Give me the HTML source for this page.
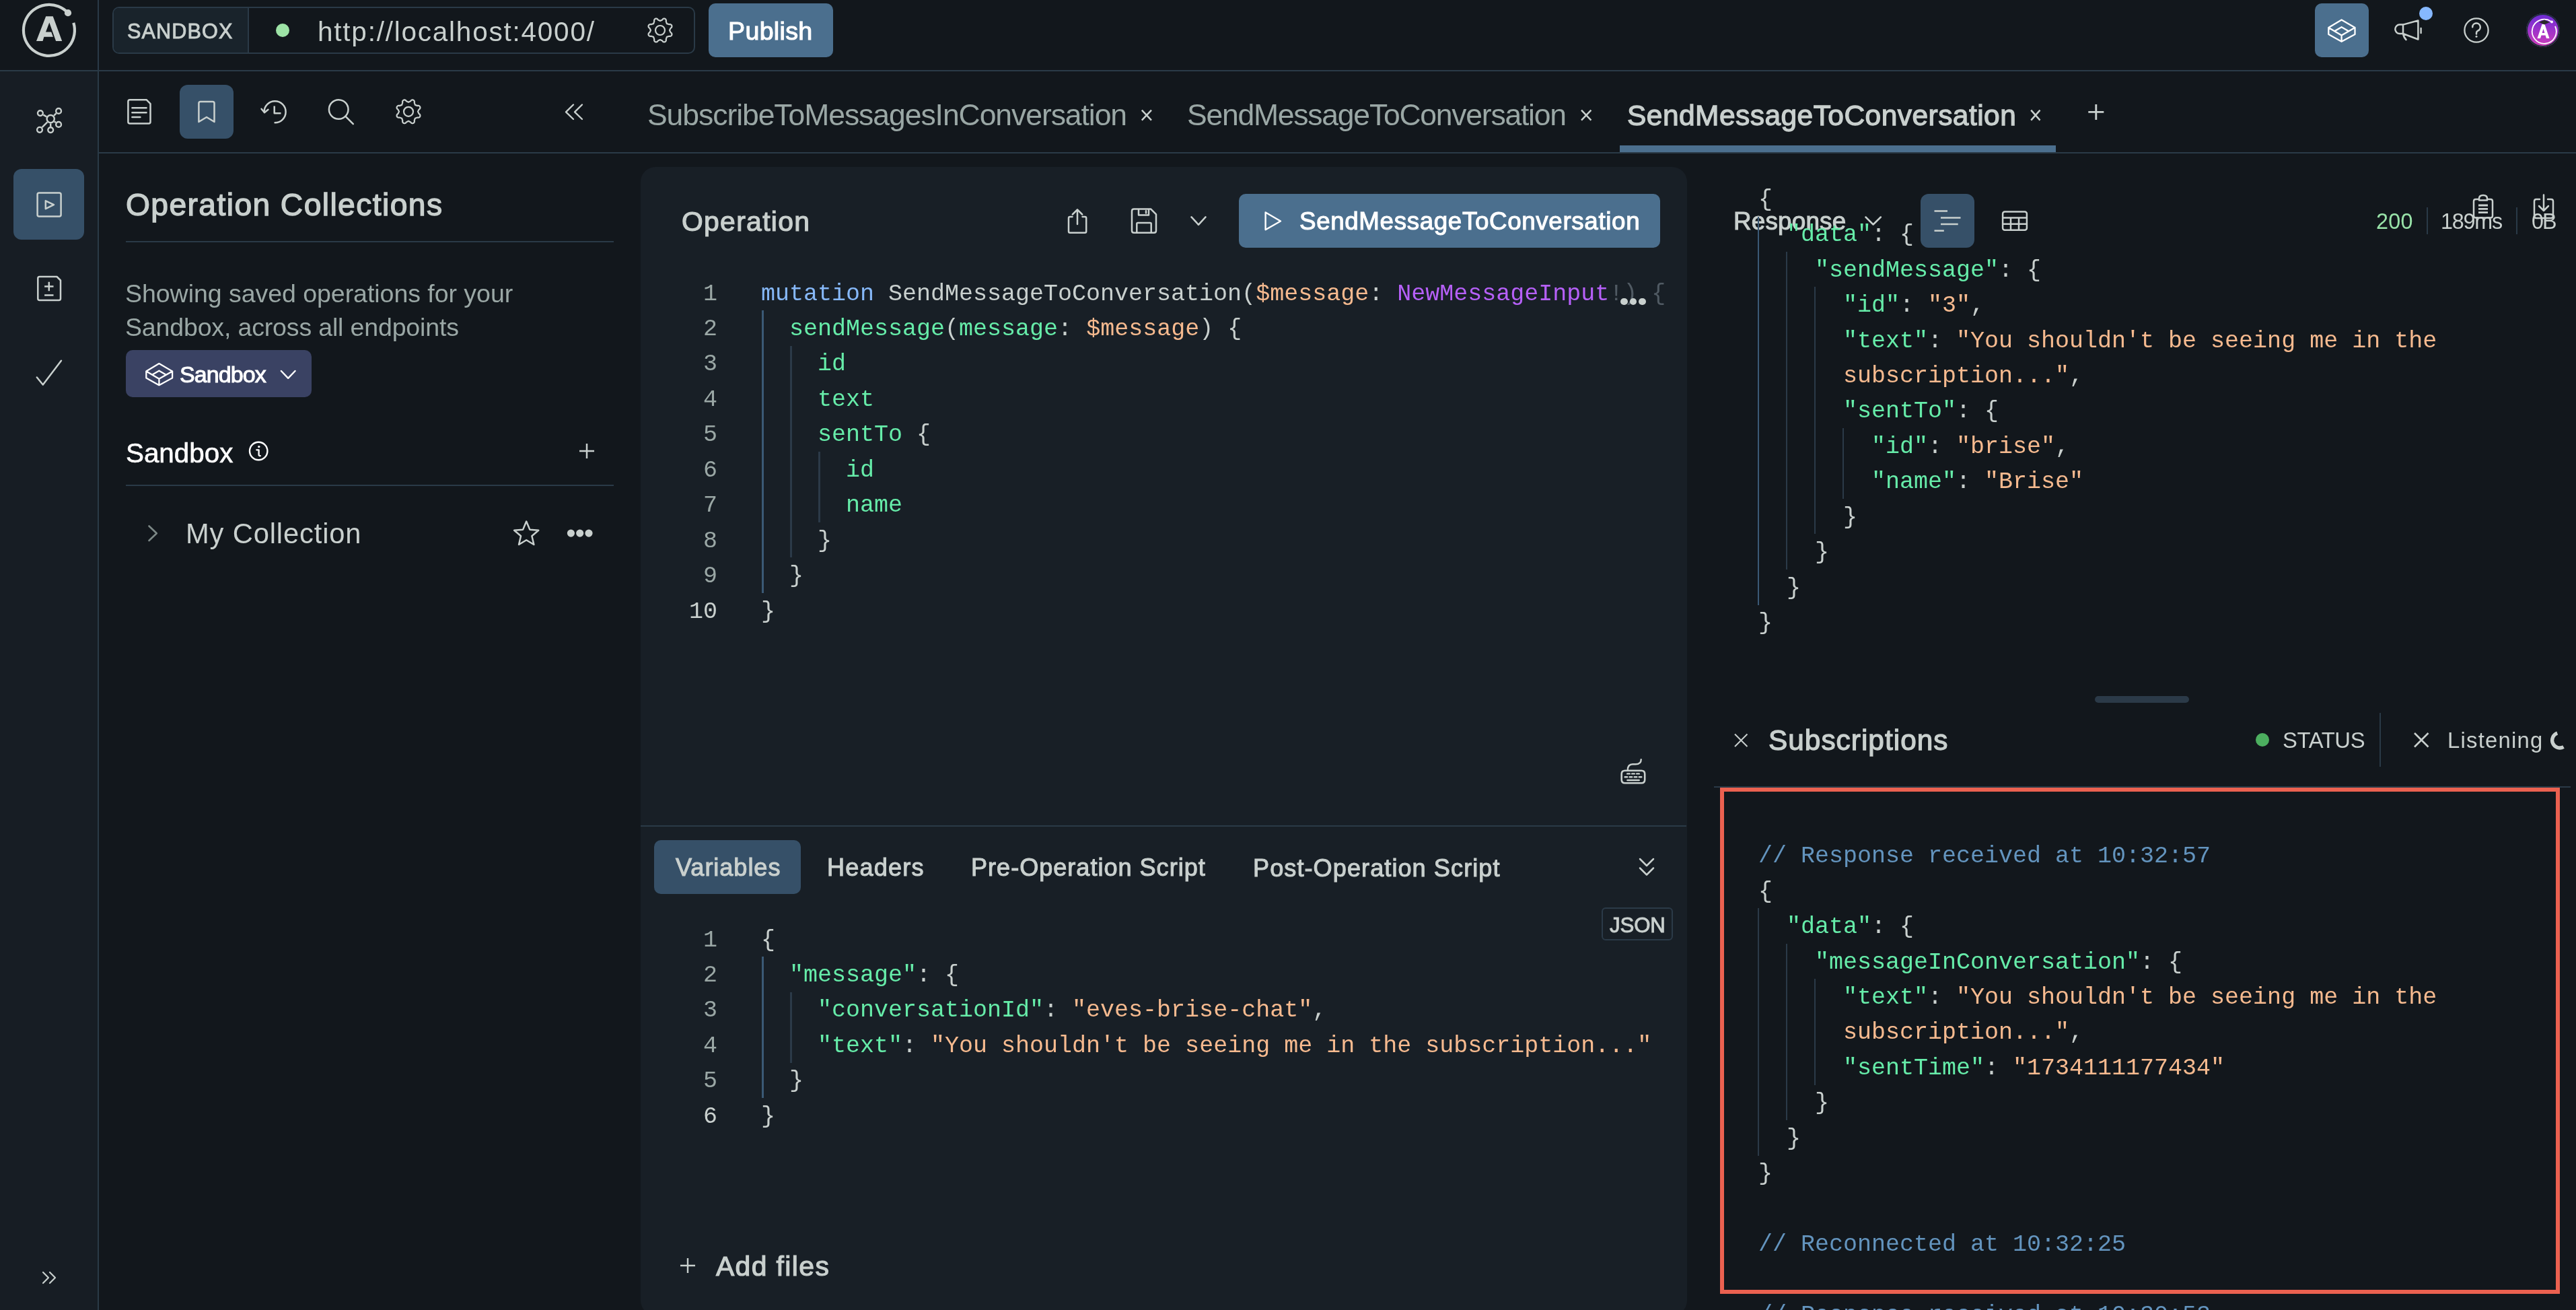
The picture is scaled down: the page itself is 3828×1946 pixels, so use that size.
<!DOCTYPE html>
<html><head><meta charset="utf-8"><title>Apollo Sandbox</title>
<style>
html,body{margin:0;padding:0;}
body{width:3828px;height:1946px;overflow:hidden;background:#12171c;position:relative;font-family:'Liberation Sans', sans-serif;}
.t{position:absolute;white-space:pre;line-height:1;will-change:transform;}
.r{position:absolute;}
</style></head><body>
<div class="r" style="left:0px;top:106px;width:146px;height:1840px;background:#171d24;border-radius:0px;"></div>
<div class="r" style="left:145px;top:0px;width:2px;height:1946px;background:#2a3a47;border-radius:0px;"></div>
<div class="r" style="left:0px;top:104px;width:3828px;height:2px;background:#2a3a47;border-radius:0px;"></div>
<div class="r" style="left:147px;top:226px;width:3681px;height:2px;background:#2a3a47;border-radius:0px;"></div>
<div class="r" style="left:167px;top:10px;width:866px;height:70px;border:2px solid #2a3a47;border-radius:10px;box-sizing:border-box;"></div>
<div class="r" style="left:169px;top:12px;width:200px;height:66px;background:#19232b;border-radius:8px 0 0 8px;"></div>
<div class="r" style="left:368px;top:12px;width:2px;height:66px;background:#2a3a47;border-radius:0px;"></div>
<div class="t" style="left:189px;top:31.2px;font-size:30.6px;color:#c9d0ce;font-weight:400;-webkit-text-stroke:0.92px #c9d0ce;font-family:'Liberation Sans', sans-serif;letter-spacing:1.133px;">SANDBOX</div>
<div class="r" style="left:410.0px;top:35.0px;width:20px;height:20px;border-radius:50%;background:#9de3a6;"></div>
<div class="t" style="left:472.2px;top:27.0px;font-size:40.5px;color:#c9d0ce;font-weight:400;font-family:'Liberation Sans', sans-serif;letter-spacing:1.771px;">http://localhost:4000/</div>
<div class="r" style="left:1053px;top:5px;width:185px;height:80px;background:#4b6f8e;border-radius:10px;"></div>
<div class="t" style="left:1082px;top:27.9px;font-size:37.6px;color:#ffffff;font-weight:400;-webkit-text-stroke:1.13px #ffffff;font-family:'Liberation Sans', sans-serif;letter-spacing:0.333px;">Publish</div>
<div class="r" style="left:3440px;top:5px;width:80px;height:80px;background:#4b6f8e;border-radius:10px;"></div>
<div class="r" style="left:3594.8px;top:9.600000000000001px;width:20.4px;height:20.4px;border-radius:50%;background:#86b8ff;"></div>
<div class="r" style="left:3754px;top:20px;width:50px;height:50px;border-radius:50%;background:linear-gradient(180deg,#6a2bd6 0%,#a233c8 55%,#d23fb8 100%);box-shadow:0 0 0 2px #1f2e38 inset;"></div>
<div class="r" style="left:267px;top:126px;width:80px;height:80px;background:#365068;border-radius:12px;"></div>
<div class="t" style="left:961.5px;top:149.3px;font-size:44.5px;color:#9aa7a5;font-weight:400;font-family:'Liberation Sans', sans-serif;letter-spacing:-1.059px;">SubscribeToMessagesInConversation</div>
<div class="t" style="left:1764px;top:149.3px;font-size:44.5px;color:#9aa7a5;font-weight:400;font-family:'Liberation Sans', sans-serif;letter-spacing:-1.237px;">SendMessageToConversation</div>
<div class="t" style="left:2417.6px;top:151.0px;font-size:42.5px;color:#c9d0ce;font-weight:400;-webkit-text-stroke:1.27px #c9d0ce;font-family:'Liberation Sans', sans-serif;letter-spacing:0.45px;">SendMessageToConversation</div>
<div class="r" style="left:2407px;top:216px;width:648px;height:10px;background:#4b6f8e;border-radius:0px;"></div>
<div class="r" style="left:20px;top:251px;width:105px;height:105px;background:#365068;border-radius:12px;"></div>
<div class="t" style="left:187.2px;top:280.9px;font-size:46.2px;color:#c9d0ce;font-weight:400;-webkit-text-stroke:1.39px #c9d0ce;font-family:'Liberation Sans', sans-serif;letter-spacing:1.42px;">Operation Collections</div>
<div class="r" style="left:187px;top:358px;width:725px;height:2px;background:#2a3a47;border-radius:0px;"></div>
<div class="t" style="left:186.2px;top:417.7px;font-size:37.5px;color:#9aa7a5;font-weight:400;font-family:'Liberation Sans', sans-serif;letter-spacing:-0.038px;">Showing saved operations for your</div>
<div class="t" style="left:186.2px;top:467.6px;font-size:37.5px;color:#9aa7a5;font-weight:400;font-family:'Liberation Sans', sans-serif;letter-spacing:-0.157px;">Sandbox, across all endpoints</div>
<div class="r" style="left:187px;top:520px;width:276px;height:70px;background:#3a4263;border-radius:10px;"></div>
<div class="t" style="left:267.4px;top:539.3px;font-size:34px;color:#ffffff;font-weight:400;-webkit-text-stroke:1.02px #ffffff;font-family:'Liberation Sans', sans-serif;letter-spacing:-0.9px;">Sandbox</div>
<div class="t" style="left:187.2px;top:652.5px;font-size:40.4px;color:#ffffff;font-weight:400;-webkit-text-stroke:0.61px #ffffff;font-family:'Liberation Sans', sans-serif;letter-spacing:-0.017px;">Sandbox</div>
<div class="r" style="left:187px;top:720px;width:725px;height:2px;background:#2a3a47;border-radius:0px;"></div>
<div class="t" style="left:276px;top:771.9px;font-size:41.7px;color:#c9d0ce;font-weight:400;font-family:'Liberation Sans', sans-serif;letter-spacing:0.858px;">My Collection</div>
<div class="r" style="left:952px;top:248px;width:1555px;height:1706px;background:#181f26;border-radius:22px;"></div>
<div class="t" style="left:1012.7px;top:308.5px;font-size:40.8px;color:#c9d0ce;font-weight:400;-webkit-text-stroke:1.22px #c9d0ce;font-family:'Liberation Sans', sans-serif;letter-spacing:1.35px;">Operation</div>
<div class="r" style="left:1841px;top:288px;width:626px;height:80px;background:#4b6f8e;border-radius:10px;"></div>
<div class="t" style="left:1931.2px;top:311.4px;font-size:36.7px;color:#ffffff;font-weight:400;-webkit-text-stroke:1.10px #ffffff;font-family:'Liberation Sans', sans-serif;letter-spacing:0.671px;">SendMessageToConversation</div>
<div class="t" style="left:1045.0px;top:419.5px;font-size:35px;color:#9aa7a5;font-weight:400;font-family:'Liberation Mono', monospace;">1</div>
<div class="t" style="left:1045.0px;top:471.9px;font-size:35px;color:#9aa7a5;font-weight:400;font-family:'Liberation Mono', monospace;">2</div>
<div class="t" style="left:1045.0px;top:524.4px;font-size:35px;color:#9aa7a5;font-weight:400;font-family:'Liberation Mono', monospace;">3</div>
<div class="t" style="left:1045.0px;top:576.8px;font-size:35px;color:#9aa7a5;font-weight:400;font-family:'Liberation Mono', monospace;">4</div>
<div class="t" style="left:1045.0px;top:629.3px;font-size:35px;color:#9aa7a5;font-weight:400;font-family:'Liberation Mono', monospace;">5</div>
<div class="t" style="left:1045.0px;top:681.7px;font-size:35px;color:#9aa7a5;font-weight:400;font-family:'Liberation Mono', monospace;">6</div>
<div class="t" style="left:1045.0px;top:734.2px;font-size:35px;color:#9aa7a5;font-weight:400;font-family:'Liberation Mono', monospace;">7</div>
<div class="t" style="left:1045.0px;top:786.6px;font-size:35px;color:#9aa7a5;font-weight:400;font-family:'Liberation Mono', monospace;">8</div>
<div class="t" style="left:1045.0px;top:839.1px;font-size:35px;color:#9aa7a5;font-weight:400;font-family:'Liberation Mono', monospace;">9</div>
<div class="t" style="left:1024.0px;top:891.5px;font-size:35px;color:#c9d0ce;font-weight:400;font-family:'Liberation Mono', monospace;">10</div>
<div class="t" style="left:1131px;top:419.5px;font-size:35px;color:#c9d0ce;font-weight:400;font-family:'Liberation Mono', monospace;"><span style="color:#86b8f8">mutation</span><span style="color:#c9d0ce"> SendMessageToConversation(</span><span style="color:#f6ba8f">$message</span><span style="color:#c9d0ce">: </span><span style="color:#b660f8">NewMessageInput</span><span style="color:#505a63">!) {</span></div>
<div class="t" style="left:1131px;top:471.9px;font-size:35px;color:#c9d0ce;font-weight:400;font-family:'Liberation Mono', monospace;"><span style="color:#c9d0ce">  </span><span style="color:#66eca9">sendMessage</span><span style="color:#c9d0ce">(</span><span style="color:#66eca9">message</span><span style="color:#c9d0ce">: </span><span style="color:#f6ba8f">$message</span><span style="color:#c9d0ce">) {</span></div>
<div class="t" style="left:1131px;top:524.4px;font-size:35px;color:#c9d0ce;font-weight:400;font-family:'Liberation Mono', monospace;"><span style="color:#66eca9">    id</span></div>
<div class="t" style="left:1131px;top:576.8px;font-size:35px;color:#c9d0ce;font-weight:400;font-family:'Liberation Mono', monospace;"><span style="color:#66eca9">    text</span></div>
<div class="t" style="left:1131px;top:629.3px;font-size:35px;color:#c9d0ce;font-weight:400;font-family:'Liberation Mono', monospace;"><span style="color:#66eca9">    sentTo</span><span style="color:#c9d0ce"> {</span></div>
<div class="t" style="left:1131px;top:681.7px;font-size:35px;color:#c9d0ce;font-weight:400;font-family:'Liberation Mono', monospace;"><span style="color:#66eca9">      id</span></div>
<div class="t" style="left:1131px;top:734.2px;font-size:35px;color:#c9d0ce;font-weight:400;font-family:'Liberation Mono', monospace;"><span style="color:#66eca9">      name</span></div>
<div class="t" style="left:1131px;top:786.6px;font-size:35px;color:#c9d0ce;font-weight:400;font-family:'Liberation Mono', monospace;"><span style="color:#c9d0ce">    }</span></div>
<div class="t" style="left:1131px;top:839.1px;font-size:35px;color:#c9d0ce;font-weight:400;font-family:'Liberation Mono', monospace;"><span style="color:#c9d0ce">  }</span></div>
<div class="t" style="left:1131px;top:891.5px;font-size:35px;color:#c9d0ce;font-weight:400;font-family:'Liberation Mono', monospace;"><span style="color:#c9d0ce">}</span></div>
<div class="r" style="left:2408.15px;top:442.55px;width:10.5px;height:10.5px;border-radius:50%;background:#c9d0ce;"></div>
<div class="r" style="left:2421.75px;top:442.55px;width:10.5px;height:10.5px;border-radius:50%;background:#c9d0ce;"></div>
<div class="r" style="left:2435.25px;top:442.55px;width:10.5px;height:10.5px;border-radius:50%;background:#c9d0ce;"></div>
<div class="r" style="left:1132.3px;top:461.3px;width:2.5px;height:419.6px;background:#3b5975;border-radius:0px;"></div>
<div class="r" style="left:1174.3px;top:513.75px;width:2.5px;height:314.7px;background:#2b3a48;border-radius:0px;"></div>
<div class="r" style="left:1216.3px;top:671.1px;width:2.5px;height:104.9px;background:#2b3a48;border-radius:0px;"></div>
<div class="r" style="left:952px;top:1226px;width:1554px;height:2px;background:#2a3a47;border-radius:0px;"></div>
<div class="r" style="left:972px;top:1248px;width:218px;height:80px;background:#365068;border-radius:10px;"></div>
<div class="t" style="left:1004.3px;top:1271.4px;font-size:36.1px;color:#c9d0ce;font-weight:400;-webkit-text-stroke:1.08px #c9d0ce;font-family:'Liberation Sans', sans-serif;letter-spacing:0.963px;">Variables</div>
<div class="t" style="left:1229.1px;top:1271.4px;font-size:36.1px;color:#c9d0ce;font-weight:400;-webkit-text-stroke:1.08px #c9d0ce;font-family:'Liberation Sans', sans-serif;letter-spacing:1.183px;">Headers</div>
<div class="t" style="left:1442.8px;top:1271.4px;font-size:36.1px;color:#c9d0ce;font-weight:400;-webkit-text-stroke:1.08px #c9d0ce;font-family:'Liberation Sans', sans-serif;letter-spacing:0.995px;">Pre-Operation Script</div>
<div class="t" style="left:1861.8px;top:1271.9px;font-size:36.1px;color:#c9d0ce;font-weight:400;-webkit-text-stroke:1.08px #c9d0ce;font-family:'Liberation Sans', sans-serif;letter-spacing:1.08px;">Post-Operation Script</div>
<div class="r" style="left:2380px;top:1348px;width:106px;height:49px;border:2px solid #2b3a48;border-radius:6px;box-sizing:border-box;"></div>
<div class="t" style="left:2392px;top:1358.8px;font-size:31.2px;color:#c9d0ce;font-weight:400;-webkit-text-stroke:0.94px #c9d0ce;font-family:'Liberation Sans', sans-serif;letter-spacing:-0.133px;">JSON</div>
<div class="t" style="left:1045.0px;top:1379.5px;font-size:35px;color:#9aa7a5;font-weight:400;font-family:'Liberation Mono', monospace;">1</div>
<div class="t" style="left:1045.0px;top:1431.9px;font-size:35px;color:#9aa7a5;font-weight:400;font-family:'Liberation Mono', monospace;">2</div>
<div class="t" style="left:1045.0px;top:1484.4px;font-size:35px;color:#9aa7a5;font-weight:400;font-family:'Liberation Mono', monospace;">3</div>
<div class="t" style="left:1045.0px;top:1536.8px;font-size:35px;color:#9aa7a5;font-weight:400;font-family:'Liberation Mono', monospace;">4</div>
<div class="t" style="left:1045.0px;top:1589.3px;font-size:35px;color:#9aa7a5;font-weight:400;font-family:'Liberation Mono', monospace;">5</div>
<div class="t" style="left:1045.0px;top:1641.7px;font-size:35px;color:#c9d0ce;font-weight:400;font-family:'Liberation Mono', monospace;">6</div>
<div class="t" style="left:1131px;top:1379.5px;font-size:35px;color:#c9d0ce;font-weight:400;font-family:'Liberation Mono', monospace;"><span style="color:#c9d0ce">{</span></div>
<div class="t" style="left:1131px;top:1431.9px;font-size:35px;color:#c9d0ce;font-weight:400;font-family:'Liberation Mono', monospace;"><span style="color:#c9d0ce">  </span><span style="color:#66eca9">"message"</span><span style="color:#c9d0ce">: {</span></div>
<div class="t" style="left:1131px;top:1484.4px;font-size:35px;color:#c9d0ce;font-weight:400;font-family:'Liberation Mono', monospace;"><span style="color:#c9d0ce">    </span><span style="color:#66eca9">"conversationId"</span><span style="color:#c9d0ce">: </span><span style="color:#f6ba8f">"eves-brise-chat"</span><span style="color:#c9d0ce">,</span></div>
<div class="t" style="left:1131px;top:1536.8px;font-size:35px;color:#c9d0ce;font-weight:400;font-family:'Liberation Mono', monospace;"><span style="color:#c9d0ce">    </span><span style="color:#66eca9">"text"</span><span style="color:#c9d0ce">: </span><span style="color:#f6ba8f">"You shouldn't be seeing me in the subscription..."</span></div>
<div class="t" style="left:1131px;top:1589.3px;font-size:35px;color:#c9d0ce;font-weight:400;font-family:'Liberation Mono', monospace;"><span style="color:#c9d0ce">  }</span></div>
<div class="t" style="left:1131px;top:1641.7px;font-size:35px;color:#c9d0ce;font-weight:400;font-family:'Liberation Mono', monospace;"><span style="color:#c9d0ce">}</span></div>
<div class="r" style="left:1132.3px;top:1421.3px;width:2.5px;height:209.8px;background:#3b5975;border-radius:0px;"></div>
<div class="r" style="left:1174.3px;top:1473.75px;width:2.5px;height:104.9px;background:#2b3a48;border-radius:0px;"></div>
<div class="t" style="left:1064.1px;top:1860.7px;font-size:40.8px;color:#c9d0ce;font-weight:400;-webkit-text-stroke:1.22px #c9d0ce;font-family:'Liberation Sans', sans-serif;letter-spacing:1.413px;">Add files</div>
<div class="t" style="left:2575.7px;top:311.3px;font-size:36.8px;color:#c9d0ce;font-weight:400;-webkit-text-stroke:1.10px #c9d0ce;font-family:'Liberation Sans', sans-serif;letter-spacing:0.214px;">Response</div>
<div class="r" style="left:2854px;top:288px;width:80px;height:80px;background:#365068;border-radius:12px;"></div>
<div class="t" style="left:2613px;top:279.7px;font-size:35px;color:#c9d0ce;font-weight:400;font-family:'Liberation Mono', monospace;"><span style="color:#c9d0ce">{</span></div>
<div class="t" style="left:2655px;top:332.1px;font-size:35px;color:#c9d0ce;font-weight:400;font-family:'Liberation Mono', monospace;"><span style="color:#66eca9">"data"</span><span style="color:#c9d0ce">: {</span></div>
<div class="t" style="left:2697px;top:384.6px;font-size:35px;color:#c9d0ce;font-weight:400;font-family:'Liberation Mono', monospace;"><span style="color:#66eca9">"sendMessage"</span><span style="color:#c9d0ce">: {</span></div>
<div class="t" style="left:2739px;top:437.0px;font-size:35px;color:#c9d0ce;font-weight:400;font-family:'Liberation Mono', monospace;"><span style="color:#66eca9">"id"</span><span style="color:#c9d0ce">: </span><span style="color:#f6ba8f">"3"</span><span style="color:#c9d0ce">,</span></div>
<div class="t" style="left:2739px;top:489.5px;font-size:35px;color:#c9d0ce;font-weight:400;font-family:'Liberation Mono', monospace;"><span style="color:#66eca9">"text"</span><span style="color:#c9d0ce">: </span><span style="color:#f6ba8f">"You shouldn't be seeing me in the</span></div>
<div class="t" style="left:2739px;top:541.9px;font-size:35px;color:#c9d0ce;font-weight:400;font-family:'Liberation Mono', monospace;"><span style="color:#f6ba8f">subscription..."</span><span style="color:#c9d0ce">,</span></div>
<div class="t" style="left:2739px;top:594.4px;font-size:35px;color:#c9d0ce;font-weight:400;font-family:'Liberation Mono', monospace;"><span style="color:#66eca9">"sentTo"</span><span style="color:#c9d0ce">: {</span></div>
<div class="t" style="left:2781px;top:646.8px;font-size:35px;color:#c9d0ce;font-weight:400;font-family:'Liberation Mono', monospace;"><span style="color:#66eca9">"id"</span><span style="color:#c9d0ce">: </span><span style="color:#f6ba8f">"brise"</span><span style="color:#c9d0ce">,</span></div>
<div class="t" style="left:2781px;top:699.3px;font-size:35px;color:#c9d0ce;font-weight:400;font-family:'Liberation Mono', monospace;"><span style="color:#66eca9">"name"</span><span style="color:#c9d0ce">: </span><span style="color:#f6ba8f">"Brise"</span></div>
<div class="t" style="left:2739px;top:751.7px;font-size:35px;color:#c9d0ce;font-weight:400;font-family:'Liberation Mono', monospace;"><span style="color:#c9d0ce">}</span></div>
<div class="t" style="left:2697px;top:804.2px;font-size:35px;color:#c9d0ce;font-weight:400;font-family:'Liberation Mono', monospace;"><span style="color:#c9d0ce">}</span></div>
<div class="t" style="left:2655px;top:856.6px;font-size:35px;color:#c9d0ce;font-weight:400;font-family:'Liberation Mono', monospace;"><span style="color:#c9d0ce">}</span></div>
<div class="t" style="left:2613px;top:909.1px;font-size:35px;color:#c9d0ce;font-weight:400;font-family:'Liberation Mono', monospace;"><span style="color:#c9d0ce">}</span></div>
<div class="r" style="left:2611.5px;top:321.5px;width:2.5px;height:577.0px;background:#3b5975;border-radius:0px;"></div>
<div class="r" style="left:2653.5px;top:373.95px;width:2.5px;height:472.1px;background:#2b3a48;border-radius:0px;"></div>
<div class="r" style="left:2695.5px;top:426.4px;width:2.5px;height:367.1px;background:#2b3a48;border-radius:0px;"></div>
<div class="r" style="left:2737.5px;top:636.2px;width:2.5px;height:104.9px;background:#2b3a48;border-radius:0px;"></div>
<div class="t" style="left:3530.6px;top:312.8px;font-size:32.3px;color:#98e2a8;font-weight:400;font-family:'Liberation Sans', sans-serif;letter-spacing:0.35px;">200</div>
<div class="r" style="left:3606px;top:308px;width:2px;height:40px;background:#2a3a47;border-radius:0px;"></div>
<div class="t" style="left:3626.9px;top:312.8px;font-size:32.3px;color:#c9d0ce;font-weight:400;font-family:'Liberation Sans', sans-serif;letter-spacing:-1.225px;">189ms</div>
<div class="r" style="left:3739px;top:308px;width:2px;height:40px;background:#2a3a47;border-radius:0px;"></div>
<div class="t" style="left:3762px;top:312.8px;font-size:32.3px;color:#c9d0ce;font-weight:400;font-family:'Liberation Sans', sans-serif;letter-spacing:-2.0px;">0B</div>
<div class="r" style="left:3113px;top:1034px;width:140px;height:10px;background:#2b3a48;border-radius:5px;"></div>
<div class="t" style="left:2627.5px;top:1078.7px;font-size:42.3px;color:#c9d0ce;font-weight:400;-webkit-text-stroke:1.27px #c9d0ce;font-family:'Liberation Sans', sans-serif;letter-spacing:1.042px;">Subscriptions</div>
<div class="r" style="left:3352.0px;top:1089.0px;width:20px;height:20px;border-radius:50%;background:#4caf5f;"></div>
<div class="t" style="left:3392px;top:1083.8px;font-size:32.8px;color:#c9d0ce;font-weight:400;font-family:'Liberation Sans', sans-serif;letter-spacing:-0.4px;">STATUS</div>
<div class="r" style="left:3536px;top:1059px;width:2px;height:80px;background:#2a3a47;border-radius:0px;"></div>
<div class="t" style="left:3637px;top:1083.8px;font-size:32.8px;color:#c9d0ce;font-weight:400;font-family:'Liberation Sans', sans-serif;letter-spacing:1.25px;">Listening</div>
<div class="r" style="left:2547px;top:1168px;width:1273px;height:2px;background:#2a3a47;border-radius:0px;"></div>
<div class="r" style="left:2556px;top:1170px;width:1248px;height:752px;border:6px solid #eb6150;box-sizing:border-box;"></div>
<div class="t" style="left:2613px;top:1255.2px;font-size:35px;color:#c9d0ce;font-weight:400;font-family:'Liberation Mono', monospace;"><span style="color:#6394be">// Response received at 10:32:57</span></div>
<div class="t" style="left:2613px;top:1307.6px;font-size:35px;color:#c9d0ce;font-weight:400;font-family:'Liberation Mono', monospace;"><span style="color:#c9d0ce">{</span></div>
<div class="t" style="left:2655px;top:1360.1px;font-size:35px;color:#c9d0ce;font-weight:400;font-family:'Liberation Mono', monospace;"><span style="color:#66eca9">"data"</span><span style="color:#c9d0ce">: {</span></div>
<div class="t" style="left:2697px;top:1412.5px;font-size:35px;color:#c9d0ce;font-weight:400;font-family:'Liberation Mono', monospace;"><span style="color:#66eca9">"messageInConversation"</span><span style="color:#c9d0ce">: {</span></div>
<div class="t" style="left:2739px;top:1465.0px;font-size:35px;color:#c9d0ce;font-weight:400;font-family:'Liberation Mono', monospace;"><span style="color:#66eca9">"text"</span><span style="color:#c9d0ce">: </span><span style="color:#f6ba8f">"You shouldn't be seeing me in the</span></div>
<div class="t" style="left:2739px;top:1517.4px;font-size:35px;color:#c9d0ce;font-weight:400;font-family:'Liberation Mono', monospace;"><span style="color:#f6ba8f">subscription..."</span><span style="color:#c9d0ce">,</span></div>
<div class="t" style="left:2739px;top:1569.9px;font-size:35px;color:#c9d0ce;font-weight:400;font-family:'Liberation Mono', monospace;"><span style="color:#66eca9">"sentTime"</span><span style="color:#c9d0ce">: </span><span style="color:#f6ba8f">"1734111177434"</span></div>
<div class="t" style="left:2697px;top:1622.3px;font-size:35px;color:#c9d0ce;font-weight:400;font-family:'Liberation Mono', monospace;"><span style="color:#c9d0ce">}</span></div>
<div class="t" style="left:2655px;top:1674.8px;font-size:35px;color:#c9d0ce;font-weight:400;font-family:'Liberation Mono', monospace;"><span style="color:#c9d0ce">}</span></div>
<div class="t" style="left:2613px;top:1727.2px;font-size:35px;color:#c9d0ce;font-weight:400;font-family:'Liberation Mono', monospace;"><span style="color:#c9d0ce">}</span></div>
<div class="t" style="left:2613px;top:1832.1px;font-size:35px;color:#c9d0ce;font-weight:400;font-family:'Liberation Mono', monospace;"><span style="color:#6394be">// Reconnected at 10:32:25</span></div>
<div class="t" style="left:2613px;top:1937.0px;font-size:35px;color:#c9d0ce;font-weight:400;font-family:'Liberation Mono', monospace;"><span style="color:#6394be">// Response received at 10:30:53</span></div>
<div class="r" style="left:2611.5px;top:1349.45px;width:2.5px;height:367.1px;background:#2b3a48;border-radius:0px;"></div>
<div class="r" style="left:2653.5px;top:1401.9px;width:2.5px;height:262.2px;background:#2b3a48;border-radius:0px;"></div>
<div class="r" style="left:2695.5px;top:1454.35px;width:2.5px;height:157.4px;background:#2b3a48;border-radius:0px;"></div>
<svg class="r" style="left:0;top:0;" width="3828" height="1946" viewBox="0 0 3828 1946"><path d="M109.3,33.9 A38,38 0 1 1 101,19.3" stroke="#c9d0ce" stroke-width="4.2" stroke-linecap="butt" stroke-linejoin="round" fill="none"/><circle cx="101" cy="19.2" r="5.1" fill="#c9d0ce"/><path d="M54,60.9 L68.2,24.3 L78.7,24.3 L92.2,60.9 L83.1,60.9 L73.3,33.4 L68,47.5 L76.2,47.5 L78.9,54.7 L65.4,54.7 L63.5,60.9 Z" fill="#c9d0ce"/><path d="M971.1,35.1 L972.3,31.7 L972.1,31.0 L972.1,30.2 L972.3,29.4 L972.7,28.8 L973.2,28.2 L973.9,27.8 L974.6,27.6 L975.4,27.6 L976.2,27.8 L976.9,28.2 L977.4,28.8 L977.8,29.4 L981.0,31.0 L984.2,29.4 L984.6,28.8 L985.1,28.2 L985.8,27.8 L986.6,27.6 L987.4,27.6 L988.1,27.8 L988.8,28.2 L989.3,28.8 L989.7,29.4 L989.9,30.2 L989.9,31.0 L989.7,31.7 L990.9,35.1 L994.3,36.3 L995.0,36.1 L995.8,36.1 L996.6,36.3 L997.2,36.7 L997.8,37.2 L998.2,37.9 L998.4,38.6 L998.4,39.4 L998.2,40.2 L997.8,40.9 L997.2,41.4 L996.6,41.8 L995.0,45.0 L996.6,48.2 L997.2,48.6 L997.8,49.1 L998.2,49.8 L998.4,50.6 L998.4,51.4 L998.2,52.1 L997.8,52.8 L997.2,53.3 L996.6,53.7 L995.8,53.9 L995.0,53.9 L994.3,53.7 L990.9,54.9 L989.7,58.3 L989.9,59.0 L989.9,59.8 L989.7,60.6 L989.3,61.2 L988.8,61.8 L988.1,62.2 L987.4,62.4 L986.6,62.4 L985.8,62.2 L985.1,61.8 L984.6,61.2 L984.2,60.6 L981.0,59.0 L977.8,60.6 L977.4,61.2 L976.9,61.8 L976.2,62.2 L975.4,62.4 L974.6,62.4 L973.9,62.2 L973.2,61.8 L972.7,61.2 L972.3,60.6 L972.1,59.8 L972.1,59.0 L972.3,58.3 L971.1,54.9 L967.7,53.7 L967.0,53.9 L966.2,53.9 L965.4,53.7 L964.8,53.3 L964.2,52.8 L963.8,52.1 L963.6,51.4 L963.6,50.6 L963.8,49.8 L964.2,49.1 L964.8,48.6 L965.4,48.2 L967.0,45.0 L965.4,41.8 L964.8,41.4 L964.2,40.9 L963.8,40.2 L963.6,39.4 L963.6,38.6 L963.8,37.9 L964.2,37.2 L964.8,36.7 L965.4,36.3 L966.2,36.1 L967.0,36.1 L967.7,36.3 Z" stroke="#c9d0ce" stroke-width="2.2" stroke-linecap="round" stroke-linejoin="round" fill="none"/><circle cx="981" cy="45" r="7.0" stroke="#c9d0ce" stroke-width="2.2" fill="none"/><g transform="translate(3460,28.6) scale(1.0)"><path d="M19.6,0.8 L39.5,12.4 L19.6,23.8 L0.3,12.4 Z M19.6,11.6 L29.6,17.4 M19.6,11.6 L9.6,17.4 M0.3,12.4 V22.4 L19.6,33.2 L39.5,22.4 V12.4 M19.6,23.8 V33.2" stroke="#ffffff" stroke-width="2.3" fill="none" stroke-linejoin="round" stroke-linecap="round"/></g><path d="M3571,36.6 H3566 A6.7,6.7 0 0 0 3566,50 H3571 Z M3571,36.6 L3593.4,30.5 V58.5 L3571,50 M3571,50 Q3572,55.5 3575.5,59" stroke="#c9d0ce" stroke-width="2.5" stroke-linecap="round" stroke-linejoin="round" fill="none"/><path d="M3597.6,42 V49" stroke="#c9d0ce" stroke-width="2.4" stroke-linecap="round" stroke-linejoin="round" fill="none"/><circle cx="3680" cy="45" r="17.6" stroke="#c9d0ce" stroke-width="2.3" fill="none"/><path d="M3674.2,40.2 A5.8,5.8 0 1 1 3682.2,45.6 C3680.8,46.3 3680,47.2 3680,48.8 V50.5" stroke="#c9d0ce" stroke-width="2.5" stroke-linecap="round" stroke-linejoin="round" fill="none"/><circle cx="3680" cy="54.2" r="1.5" fill="#c9d0ce"/><path d="M3797,39 A18,18 0 1 1 3791,32" stroke="#ffffff" stroke-width="1.8" stroke-linecap="butt" stroke-linejoin="round" fill="none"/><circle cx="3792" cy="32.5" r="2" fill="#ffffff"/><path d="M3770.5,57 L3777.5,36 L3781.5,36 L3788.5,57 L3784,57 L3779.5,43 L3775,57 Z M3773.5,49 H3785.5 V52.5 H3773.5 Z" fill="#ffffff"/><path d="M3773,33 L3781,29.5 L3789,33 L3781,36.5 Z" fill="#2a2a2a"/><path d="M193,148.2 H217.6 L223.5,154.1 V181 Q223.5,183.5 221,183.5 H193 Q190.4,183.5 190.4,181 V150.8 Q190.4,148.2 193,148.2 Z M196.4,160.2 H217.5 M196.4,167.3 H217.5 M196.4,174.1 H208.4" stroke="#c9d0ce" stroke-width="2.5" stroke-linecap="round" stroke-linejoin="round" fill="none"/><path d="M297.9,150.9 H316 Q318.5,150.9 318.5,153.4 V181 L307,174 L295.4,181 V153.4 Q295.4,150.9 297.9,150.9 Z" stroke="#c9d0ce" stroke-width="2.5" stroke-linecap="round" stroke-linejoin="round" fill="none"/><path d="M392.6,166.3 A16,16 0 1 1 408.6,182.3" stroke="#c9d0ce" stroke-width="2.5" stroke-linecap="round" stroke-linejoin="round" fill="none"/><path d="M388.5,161.8 L393,167.3 L398.5,162.8" stroke="#c9d0ce" stroke-width="2.4" stroke-linecap="round" stroke-linejoin="round" fill="none"/><path d="M407.7,157.6 V168.2 H417.5" stroke="#c9d0ce" stroke-width="2.5" stroke-linecap="butt" stroke-linejoin="round" fill="none"/><circle cx="503.2" cy="162.5" r="14.3" stroke="#c9d0ce" stroke-width="2.5" fill="none"/><path d="M513.5,172.8 L524.8,184.1" stroke="#c9d0ce" stroke-width="2.5" stroke-linecap="round" stroke-linejoin="round" fill="none"/><path d="M597.1,155.9 L598.3,152.5 L598.1,151.8 L598.1,151.0 L598.3,150.2 L598.7,149.6 L599.2,149.0 L599.9,148.6 L600.6,148.4 L601.4,148.4 L602.2,148.6 L602.9,149.0 L603.4,149.6 L603.8,150.2 L607.0,151.8 L610.2,150.2 L610.6,149.6 L611.1,149.0 L611.8,148.6 L612.6,148.4 L613.4,148.4 L614.1,148.6 L614.8,149.0 L615.3,149.6 L615.7,150.2 L615.9,151.0 L615.9,151.8 L615.7,152.5 L616.9,155.9 L620.3,157.1 L621.0,156.9 L621.8,156.9 L622.6,157.1 L623.2,157.5 L623.8,158.0 L624.2,158.7 L624.4,159.4 L624.4,160.2 L624.2,161.0 L623.8,161.7 L623.2,162.2 L622.6,162.6 L621.0,165.8 L622.6,169.0 L623.2,169.4 L623.8,169.9 L624.2,170.6 L624.4,171.4 L624.4,172.2 L624.2,172.9 L623.8,173.6 L623.2,174.1 L622.6,174.5 L621.8,174.7 L621.0,174.7 L620.3,174.5 L616.9,175.7 L615.7,179.1 L615.9,179.8 L615.9,180.6 L615.7,181.4 L615.3,182.0 L614.8,182.6 L614.1,183.0 L613.4,183.2 L612.6,183.2 L611.8,183.0 L611.1,182.6 L610.6,182.0 L610.2,181.4 L607.0,179.8 L603.8,181.4 L603.4,182.0 L602.9,182.6 L602.2,183.0 L601.4,183.2 L600.6,183.2 L599.9,183.0 L599.2,182.6 L598.7,182.0 L598.3,181.4 L598.1,180.6 L598.1,179.8 L598.3,179.1 L597.1,175.7 L593.7,174.5 L593.0,174.7 L592.2,174.7 L591.4,174.5 L590.8,174.1 L590.2,173.6 L589.8,172.9 L589.6,172.2 L589.6,171.4 L589.8,170.6 L590.2,169.9 L590.8,169.4 L591.4,169.0 L593.0,165.8 L591.4,162.6 L590.8,162.2 L590.2,161.7 L589.8,161.0 L589.6,160.2 L589.6,159.4 L589.8,158.7 L590.2,158.0 L590.8,157.5 L591.4,157.1 L592.2,156.9 L593.0,156.9 L593.7,157.1 Z" stroke="#c9d0ce" stroke-width="2.2" stroke-linecap="round" stroke-linejoin="round" fill="none"/><circle cx="607" cy="165.8" r="7.0" stroke="#c9d0ce" stroke-width="2.2" fill="none"/><path d="M852,155.5 L841,166.3 L852,177 M865,155.5 L854,166.3 L865,177" stroke="#c9d0ce" stroke-width="2.4" stroke-linecap="round" stroke-linejoin="round" fill="none"/><path d="M1696.8,163.6 L1711,178.6 M1711,163.6 L1696.8,178.6" stroke="#c9d0ce" stroke-width="2.5" stroke-linecap="butt" stroke-linejoin="round" fill="none"/><path d="M2350,163.6 L2364.4,178.6 M2364.4,163.6 L2350,178.6" stroke="#c9d0ce" stroke-width="2.5" stroke-linecap="butt" stroke-linejoin="round" fill="none"/><path d="M3018.2,163.6 L3031.5,178.6 M3031.5,163.6 L3018.2,178.6" stroke="#c9d0ce" stroke-width="2.5" stroke-linecap="butt" stroke-linejoin="round" fill="none"/><path d="M3114.8,154.9 V177.9 M3103.3,166.4 H3126.3" stroke="#c9d0ce" stroke-width="2.9" stroke-linecap="butt" stroke-linejoin="round" fill="none"/><circle cx="75.2" cy="176.6" r="5.6" stroke="#c9d0ce" stroke-width="2.4" fill="none"/><circle cx="59.9" cy="168.1" r="3.9" stroke="#c9d0ce" stroke-width="2.4" fill="none"/><path d="M69.26,173.30 L64.36,170.58" stroke="#c9d0ce" stroke-width="2.5" stroke-linecap="butt" stroke-linejoin="round" fill="none"/><circle cx="87.1" cy="164.9" r="3.9" stroke="#c9d0ce" stroke-width="2.4" fill="none"/><path d="M80.05,171.83 L83.46,168.48" stroke="#c9d0ce" stroke-width="2.5" stroke-linecap="butt" stroke-linejoin="round" fill="none"/><circle cx="87.1" cy="184.9" r="3.9" stroke="#c9d0ce" stroke-width="2.4" fill="none"/><path d="M80.78,180.49 L82.92,181.98" stroke="#c9d0ce" stroke-width="2.5" stroke-linecap="butt" stroke-linejoin="round" fill="none"/><circle cx="59" cy="192.8" r="3.9" stroke="#c9d0ce" stroke-width="2.4" fill="none"/><path d="M70.39,181.41 L62.61,189.19" stroke="#c9d0ce" stroke-width="2.5" stroke-linecap="butt" stroke-linejoin="round" fill="none"/><circle cx="75.2" cy="193.1" r="3.9" stroke="#c9d0ce" stroke-width="2.4" fill="none"/><path d="M75.20,183.40 L75.20,188.00" stroke="#c9d0ce" stroke-width="2.5" stroke-linecap="butt" stroke-linejoin="round" fill="none"/><rect x="55.6" y="286.4" width="35" height="35" rx="2.5" stroke="#c9d0ce" stroke-width="2.5" fill="none"/><path d="M67.8,298.3 L80,304.2 L67.8,310.2 Z" stroke="#c9d0ce" stroke-width="2.5" stroke-linecap="round" stroke-linejoin="round" fill="none"/><path d="M58.8,411 H84.5 L90,416.5 V443.5 Q90,446 87.5,446 H58.8 Q56.3,446 56.3,443.5 V413.5 Q56.3,411 58.8,411 Z M72.8,418.8 V432.2 M66.1,425.5 H79.5 M66.1,438.4 H79.5" stroke="#c9d0ce" stroke-width="2.5" stroke-linecap="butt" stroke-linejoin="round" fill="none"/><path d="M54.8,560.5 L63.8,571.5 L91,535.8" stroke="#c9d0ce" stroke-width="2.5" stroke-linecap="round" stroke-linejoin="round" fill="none"/><path d="M64,1890 L72,1898 L64,1906 M74,1890 L82,1898 L74,1906" stroke="#c9d0ce" stroke-width="2.2" stroke-linecap="round" stroke-linejoin="round" fill="none"/><g transform="translate(217,539.3) scale(0.99)"><path d="M19.6,0.8 L39.5,12.4 L19.6,23.8 L0.3,12.4 Z M19.6,11.6 L29.6,17.4 M19.6,11.6 L9.6,17.4 M0.3,12.4 V22.4 L19.6,33.2 L39.5,22.4 V12.4 M19.6,23.8 V33.2" stroke="#ffffff" stroke-width="2.323232323232323" fill="none" stroke-linejoin="round" stroke-linecap="round"/></g><path d="M417.8,551 L428.2,561.8 L438.6,551" stroke="#ffffff" stroke-width="2.4" stroke-linecap="round" stroke-linejoin="round" fill="none"/><circle cx="384.2" cy="670" r="13.2" stroke="#ffffff" stroke-width="2.4" fill="none"/><circle cx="384.8" cy="663.6" r="1.7" fill="#ffffff"/><path d="M381.3,668.3 H384.6 V675.2 Q384.6,677.2 386.8,677.2" stroke="#ffffff" stroke-width="2.3" stroke-linecap="round" stroke-linejoin="round" fill="none"/><path d="M872,659 V681 M861,670 H883" stroke="#c9d0ce" stroke-width="2.5" stroke-linecap="butt" stroke-linejoin="round" fill="none"/><path d="M221.5,781.5 L232.8,792.3 L221.5,803" stroke="#7c8886" stroke-width="2.6" stroke-linecap="round" stroke-linejoin="round" fill="none"/><path d="M782.20,774.60 L787.25,786.64 L800.27,787.73 L790.38,796.26 L793.37,808.97 L782.20,802.20 L771.03,808.97 L774.02,796.26 L764.13,787.73 L777.15,786.64 Z" stroke="#c9d0ce" stroke-width="2.5" stroke-linecap="round" stroke-linejoin="round" fill="none"/><circle cx="848.4" cy="792.1" r="5.6" fill="#c9d0ce"/><circle cx="861.7" cy="792.1" r="5.6" fill="#c9d0ce"/><circle cx="875" cy="792.1" r="5.6" fill="#c9d0ce"/><path d="M1601,311.5 V333 M1593.8,318.5 L1601,311.3 L1608.2,318.5 M1593.5,322 H1590 Q1588,322 1588,324 V343.7 Q1588,345.7 1590,345.7 H1612.2 Q1614.2,345.7 1614.2,343.7 V324 Q1614.2,322 1612.2,322 H1608.5" stroke="#c9d0ce" stroke-width="2.5" stroke-linecap="round" stroke-linejoin="round" fill="none"/><path d="M1685,310.4 H1710 L1718,318.4 V342.7 Q1718,345.7 1715,345.7 H1685 Q1682,345.7 1682,342.7 V313.4 Q1682,310.4 1685,310.4 Z M1692,310.4 V319.5 H1707 V310.4 M1703,313.3 V316.5 M1689.3,345.7 V332.5 Q1689.3,331 1690.8,331 H1709.2 Q1710.7,331 1710.7,332.5 V345.7" stroke="#c9d0ce" stroke-width="2.5" stroke-linecap="round" stroke-linejoin="round" fill="none"/><path d="M1770.5,322.4 L1781,333.8 L1791.5,322.4" stroke="#c9d0ce" stroke-width="2.5" stroke-linecap="round" stroke-linejoin="round" fill="none"/><path d="M1880.6,315.5 L1903,328.5 L1880.6,341.2 Z" stroke="#ffffff" stroke-width="2.4" stroke-linecap="round" stroke-linejoin="round" fill="none"/><path d="M2414.7,1144.8 H2439.2 Q2444.2,1144.8 2444.2,1149.8 V1158.3 Q2444.2,1163.3 2439.2,1163.3 H2414.7 Q2409.7,1163.3 2409.7,1158.3 V1149.8 Q2409.7,1144.8 2414.7,1144.8 Z" stroke="#c9d0ce" stroke-width="2.6" stroke-linecap="round" stroke-linejoin="round" fill="none"/><path d="M2418.2,1149.4 H2421.8 M2425.2,1149.4 H2428.8 M2432.2,1149.4 H2435.8 M2414.6,1154.2 H2418.2 M2421.6,1154.2 H2425.2 M2428.7,1154.2 H2432.3 M2435.7,1154.2 H2439.3 M2418.4,1159 H2435.7" stroke="#c9d0ce" stroke-width="2.4" stroke-linecap="round" stroke-linejoin="round" fill="none"/><path d="M2418.8,1144 Q2418.8,1135.2 2426,1135.2 H2430.5 Q2438.7,1135.2 2438.7,1128.2" stroke="#c9d0ce" stroke-width="2.4" stroke-linecap="round" stroke-linejoin="round" fill="none"/><path d="M2437,1276 L2447,1286 L2457,1276 M2437,1289.5 L2447,1299.5 L2457,1289.5" stroke="#c9d0ce" stroke-width="2.5" stroke-linecap="round" stroke-linejoin="round" fill="none"/><path d="M1022,1869 V1891 M1011,1880 H1033" stroke="#c9d0ce" stroke-width="2.4" stroke-linecap="butt" stroke-linejoin="round" fill="none"/><path d="M2772.5,322.5 L2783.6,333.5 L2794.8,322.5" stroke="#c9d0ce" stroke-width="2.5" stroke-linecap="round" stroke-linejoin="round" fill="none"/><path d="M2874.5,313.5 H2894 M2884,323.5 H2913.5 M2884,333 H2909.7 M2874.5,342.8 H2888.8" stroke="#c9d0ce" stroke-width="2.5" stroke-linecap="butt" stroke-linejoin="round" fill="none"/><rect x="2976.1" y="314.4" width="35.8" height="27.4" rx="3" stroke="#c9d0ce" stroke-width="2.5" fill="none"/><path d="M2976.1,323.5 H3011.9 M2976.1,332.8 H3011.9 M2988,323.5 V341.8 M3000,323.5 V341.8" stroke="#c9d0ce" stroke-width="2.5" stroke-linecap="butt" stroke-linejoin="round" fill="none"/><path d="M3682.5,296 H3679 Q3676,296 3676,299 V320.5 Q3676,323.5 3679,323.5 H3701 Q3704,323.5 3704,320.5 V299 Q3704,296 3701,296 H3697.5 M3684,297.5 H3696 V295 Q3696,290 3690,290 Q3684,290 3684,295 Z" stroke="#c9d0ce" stroke-width="2.5" stroke-linecap="round" stroke-linejoin="round" fill="none"/><path d="M3683,305 H3697 M3683,310.3 H3697 M3683,315.6 H3697" stroke="#c9d0ce" stroke-width="2.8" stroke-linecap="butt" stroke-linejoin="round" fill="none"/><path d="M3780,289.5 V313 M3773,306 L3780,313 L3787,306 M3774,296 H3769 Q3766,296 3766,299 V321 Q3766,324 3769,324 H3791 Q3794,324 3794,321 V299 Q3794,296 3791,296 H3786" stroke="#c9d0ce" stroke-width="2.5" stroke-linecap="round" stroke-linejoin="round" fill="none"/><path d="M2578,1090.5 L2596.5,1109 M2596.5,1090.5 L2578,1109" stroke="#c9d0ce" stroke-width="2.0" stroke-linecap="butt" stroke-linejoin="round" fill="none"/><path d="M3588,1089 L3608.5,1109.5 M3608.5,1089 L3588,1109.5" stroke="#c9d0ce" stroke-width="2.6" stroke-linecap="butt" stroke-linejoin="round" fill="none"/><path d="M3800.2,1089 A11.3,11.3 0 1 0 3809.5,1109.5" stroke="#c9d0ce" stroke-width="5.3" stroke-linecap="butt" stroke-linejoin="round" fill="none"/></svg>
</body></html>
